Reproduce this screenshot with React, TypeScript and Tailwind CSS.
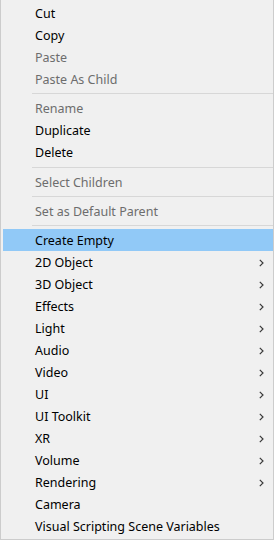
type Item =
  | { kind: "item"; label: string; disabled?: boolean; sub?: boolean; active?: boolean }
  | { kind: "sep"; tall?: boolean };

const items: Item[] = [
  { kind: "item", label: "Cut" },
  { kind: "item", label: "Copy" },
  { kind: "item", label: "Paste", disabled: true },
  { kind: "item", label: "Paste As Child", disabled: true },
  { kind: "sep" },
  { kind: "item", label: "Rename", disabled: true },
  { kind: "item", label: "Duplicate" },
  { kind: "item", label: "Delete" },
  { kind: "sep", tall: true },
  { kind: "item", label: "Select Children", disabled: true },
  { kind: "sep" },
  { kind: "item", label: "Set as Default Parent", disabled: true },
  { kind: "sep" },
  { kind: "item", label: "Create Empty", active: true },
  { kind: "item", label: "2D Object", sub: true },
  { kind: "item", label: "3D Object", sub: true },
  { kind: "item", label: "Effects", sub: true },
  { kind: "item", label: "Light", sub: true },
  { kind: "item", label: "Audio", sub: true },
  { kind: "item", label: "Video", sub: true },
  { kind: "item", label: "UI", sub: true },
  { kind: "item", label: "UI Toolkit", sub: true },
  { kind: "item", label: "XR", sub: true },
  { kind: "item", label: "Volume", sub: true },
  { kind: "item", label: "Rendering", sub: true },
  { kind: "item", label: "Camera" },
  { kind: "item", label: "Visual Scripting Scene Variables" },
];

function Chevron() {
  return (
    <svg width="5" height="8" viewBox="0 0 5 8" className="shrink-0">
      <polyline points="0.8,0.8 4,4 0.8,7.2" fill="none" stroke="#3a3a3a" strokeWidth="1.2" />
    </svg>
  );
}

export default function App() {
  return (
    <div className="w-[275px] h-[540px] bg-white">
      <div
        className="w-[274px] h-[540px] bg-[#f0f0f0] border-l border-r border-b border-[#cccccc] pt-[2px] pl-[2px] text-[12.5px] leading-none"
        style={{ fontFamily: '"Noto Sans", "Liberation Sans", sans-serif' }}
      >
        {items.map((it, i) =>
          it.kind === "sep" ? (
            <div
              key={i}
              className={`${it.tall ? "h-[8px]" : "h-[7px]"} flex items-center pl-[29px]`}
            >
              <div className="h-px w-full bg-[#d7d7d7]" />
            </div>
          ) : (
            <div
              key={i}
              className={`h-[22px] flex items-center pt-[2px] pl-[32px] pr-[9px] ${
                it.active ? "bg-[#91c9f7]" : ""
              } ${it.disabled ? "text-[#6d6d6d]" : "text-black"}`}
            >
              <span className="flex-1">{it.label}</span>
              {it.sub && <Chevron />}
            </div>
          )
        )}
      </div>
    </div>
  );
}
